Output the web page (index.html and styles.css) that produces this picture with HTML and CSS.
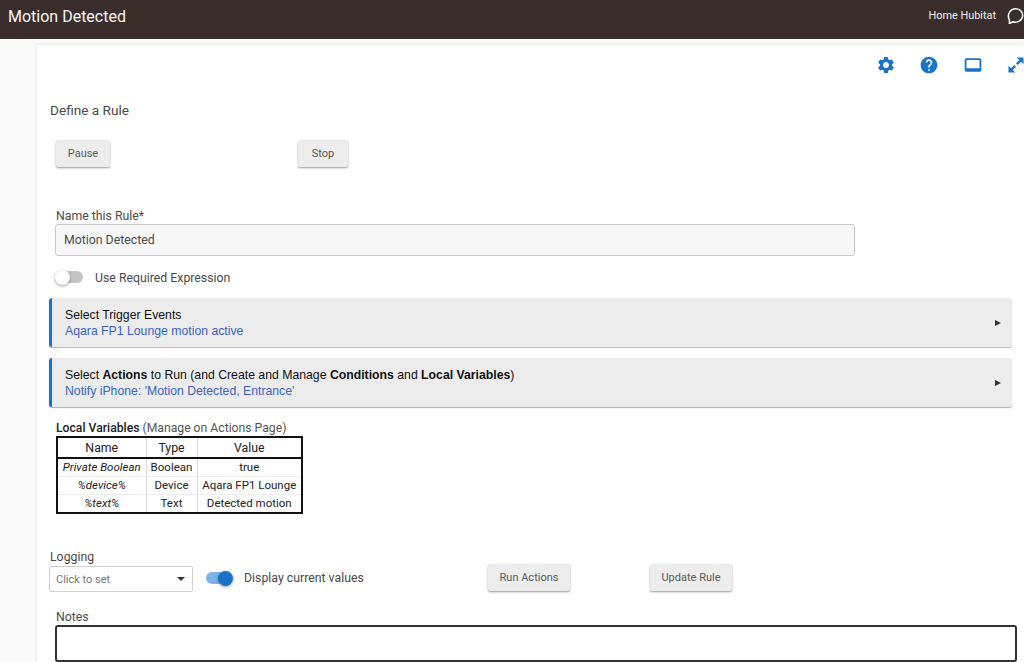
FILE: index.html
```html
<!DOCTYPE html>
<html lang="en">
<head>
<meta charset="utf-8">
<title>Motion Detected</title>
<link rel="stylesheet" href="styles.css">
</head>
<body>
<header class="topbar">
  <div class="page-title">Motion Detected</div>
  <div class="hub">
    <span class="hub-name">Home Hubitat</span>
    <svg class="chat" viewBox="0 0 18 18" width="18" height="18"><path d="M3.2 16.2 C3.6 14.8 3.7 13.6 3.2 12.6 C1.6 9.4 2.4 5 5.6 2.9 C9 .8 13.6 1.6 15.6 4.8 C17.6 8 16.6 12.2 13.2 14.2 C10.9 15.5 8.4 15.5 6.6 14.8 C5.6 15.6 4.4 16 3.2 16.2 Z" fill="none" stroke="#fff" stroke-width="1.5" stroke-linejoin="round"/></svg>
  </div>
</header>
<main class="card">
  <div class="tools">
    <svg class="tool" viewBox="0 0 24 24"><path d="M19.14 12.94c.04-.3.06-.61.06-.94 0-.32-.02-.64-.07-.94l2.03-1.58a.49.49 0 0 0 .12-.61l-1.92-3.32a.488.488 0 0 0-.59-.22l-2.39.96c-.5-.38-1.03-.7-1.62-.94l-.36-2.54a.484.484 0 0 0-.48-.41h-3.84c-.24 0-.43.17-.47.41l-.36 2.54c-.59.24-1.13.57-1.62.94l-2.39-.96c-.22-.08-.47 0-.59.22L2.74 8.87c-.12.21-.08.47.12.61l2.03 1.58c-.05.3-.09.63-.09.94s.02.64.07.94l-2.03 1.58a.49.49 0 0 0-.12.61l1.92 3.32c.12.22.37.29.59.22l2.39-.96c.5.38 1.03.7 1.62.94l.36 2.54c.05.24.24.41.48.41h3.84c.24 0 .44-.17.47-.41l.36-2.54c.59-.24 1.13-.56 1.62-.94l2.39.96c.22.08.47 0 .59-.22l1.92-3.32c.12-.22.07-.47-.12-.61l-2.01-1.58zM12 15.6c-1.98 0-3.6-1.62-3.6-3.6s1.62-3.6 3.6-3.6 3.6 1.62 3.6 3.6-1.62 3.6-3.6 3.6z"/></svg>
    <svg class="tool" viewBox="0 0 24 24"><path d="M12 2C6.48 2 2 6.48 2 12s4.48 10 10 10 10-4.48 10-10S17.52 2 12 2zm1 17h-2v-2h2v2zm2.07-7.75l-.9.92C13.45 12.9 13 13.5 13 15h-2v-.5c0-1.1.45-2.1 1.17-2.83l1.24-1.26c.37-.36.59-.86.59-1.41 0-1.1-.9-2-2-2s-2 .9-2 2H8c0-2.21 1.79-4 4-4s4 1.79 4 4c0 .88-.36 1.68-.93 2.25z"/></svg>
    <svg class="tool" viewBox="0 0 24 24"><path fill-rule="evenodd" d="M4 4h16a2 2 0 0 1 2 2v12a2 2 0 0 1-2 2H4a2 2 0 0 1-2-2V6a2 2 0 0 1 2-2zM4.200 6v10h15.600V6z"/></svg>
    <svg class="tool" viewBox="0 0 24 24"><path d="M21 11V3h-8l3 3-4 4 2 2 4-4zM3 13v8h8l-3-3 4-4-2-2-4 4z"/></svg>
  </div>
  <h1 class="section-title">Define a Rule</h1>
  <div class="control-row">
    <button class="btn btn-pause" type="button">Pause</button>
    <button class="btn" type="button">Stop</button>
  </div>
  <label class="field-label">Name this Rule*</label>
  <div class="text-input">Motion Detected</div>
  <div class="switch-row">
    <span class="switch"><span class="track"></span><span class="thumb"></span></span>
    <span class="switch-text">Use Required Expression</span>
  </div>
  <section class="panel">
    <div class="panel-text">
      <div class="panel-head">Select Trigger Events</div>
      <div class="panel-sub">Aqara FP1 Lounge motion active</div>
    </div>
    <span class="arrow"></span>
  </section>
  <section class="panel">
    <div class="panel-text">
      <div class="panel-head">Select <b>Actions</b> to Run (and Create and Manage <b>Conditions</b> and <b>Local Variables</b>)</div>
      <div class="panel-sub">Notify iPhone: 'Motion Detected, Entrance'</div>
    </div>
    <span class="arrow"></span>
  </section>
  <div class="vars-title"><b>Local Variables</b> (Manage on Actions Page)</div>
  <table class="vars">
    <thead>
      <tr><th class="c-name">Name</th><th class="c-type">Type</th><th class="c-value">Value</th></tr>
    </thead>
    <tbody>
      <tr><td><i>Private Boolean</i></td><td>Boolean</td><td>true</td></tr>
      <tr><td><i>%device%</i></td><td>Device</td><td>Aqara FP1 Lounge</td></tr>
      <tr><td><i>%text%</i></td><td>Text</td><td>Detected motion</td></tr>
    </tbody>
  </table>
  <div class="logging-label">Logging</div>
  <div class="logging-row">
    <div class="select"><span>Click to set</span><span class="caret"></span></div>
    <div class="display-toggle">
      <span class="switch on"><span class="track"></span><span class="thumb"></span></span>
      <span>Display current values</span>
    </div>
    <button class="btn btn-run" type="button">Run Actions</button>
    <button class="btn btn-update" type="button">Update Rule</button>
  </div>
  <label class="notes-label">Notes</label>
  <div class="notes"></div>
</main>
</body>
</html>
```
FILE: styles.css
```css
* { box-sizing: border-box; }
html, body { margin: 0; height: 662px; overflow: hidden; }
body { background: #fafafa; font-family: Roboto, "Liberation Sans", sans-serif; color: #4a4a4a; font-size: 12.3px; }
.topbar { height: 39px; background: #392e2c; color: #fff; display: flex; align-items: center; justify-content: space-between; padding-left: 8px; }
.page-title { font-size: 16px; position: relative; top: -3px; color: #f5f5f5; }
.hub { display: flex; align-items: center; gap: 10px; margin-right: 1px; position: relative; top: -4px; }
.hub-name { font-size: 10.9px; color: #eee; }
.chat { display: block; margin-right: -1px; }
.card { margin: 6px 0 0 37px; height: 617px; background: #fff; box-shadow: 0 0 3px rgba(0,0,0,.12); padding: 0 12px; }
.tools { display: flex; justify-content: flex-end; gap: 23.5px; padding-top: 10px; margin-right: -14px; height: 34px; }
.tool { width: 20px; height: 20px; fill: #1a73c9; display: block; flex: none; }
.section-title { margin: 23px 0 0 1px; font-size: 13.6px; font-weight: 400; line-height: 16px; color: #4a4a4a; }
.control-row { display: flex; margin: 22px 0 0 7px; }
.btn { border: 0; background: #ededed; border-radius: 2px; box-shadow: 0 1px 2px rgba(0,0,0,.4); color: #5a5a5a; font: 400 11px Roboto, sans-serif; height: 27px; padding: 0; }
.control-row .btn { width: 50px; }
.control-row .btn-pause { width: 54px; margin-right: 188px; }
.field-label { display: block; margin: 42px 0 0 7px; line-height: 15px; }
.text-input { margin: 0 0 0 6px; width: 800px; height: 32px; border: 1px solid #c8c8c8; border-radius: 3px; background: #f7f7f7; padding-left: 8px; line-height: 30px; }
.switch-row { display: flex; align-items: center; gap: 12px; margin: 12px 0 0 6px; height: 18px; }
.switch-text { position: relative; top: 1px; }
.switch { position: relative; display: inline-block; width: 28px; height: 14px; flex: none; }
.track { position: absolute; left: 2px; right: 0; top: 1px; height: 12px; border-radius: 6px; background: #c4c4c4; }
.thumb { position: absolute; left: 0; top: 0; width: 15px; height: 15px; border-radius: 50%; background: #fff; box-shadow: 0 1px 3px rgba(0,0,0,.4); }
.on .track { background: #7fb3e6; }
.on .thumb { left: 14px; background: #1a73c9; }
.panel { display: flex; align-items: center; justify-content: space-between; margin: 12px 0 0 0; width: 963px; height: 49px; background: #ececec; border-left: 3px solid #1a73c9; border-radius: 3px; box-shadow: 0 1px 1px rgba(0,0,0,.3); padding: 0 11px 0 13px; font-family: "Liberation Sans", Arial, sans-serif; }
.panel + .panel { margin-top: 11px; }
.panel-head { font-size: 12.25px; line-height: 16px; color: #111; }
.panel-sub { font-size: 12.25px; line-height: 16px; color: #3b62c4; }
.arrow { width: 0; height: 0; border-left: 6px solid #333; border-top: 3px solid transparent; border-bottom: 3px solid transparent; }
.vars-title { margin: 14px 0 0 7px; line-height: 15px; font-size: 12.2px; color: #555; }
.vars-title b { font-weight: 500; color: #222; }
.vars { margin: 0 0 0 7px; width: 247px; border-collapse: collapse; border: 2px solid #111; font-size: 11.5px; color: #222; table-layout: fixed; }
.vars th { font-weight: 400; font-size: 12.3px; height: 21px; padding: 0; border-bottom: 2px solid #111; border-right: 1px solid #ddd; }
.vars td { height: 18px; padding: 0; text-align: center; border-right: 1px solid #ddd; border-bottom: 1px solid #eee; }
.vars th:last-child, .vars td:last-child { border-right: 0; }
.vars tr:last-child td { border-bottom: 0; height: 19px; }
.c-name { width: 89px; }
.c-type { width: 51px; }
.logging-label { margin: 36px 0 0 1px; line-height: 15px; }
.logging-row { display: flex; align-items: center; margin-top: 1px; height: 26px; }
.select { width: 144px; height: 26px; border: 1px solid #d0d0d0; border-radius: 2px; display: flex; align-items: center; justify-content: space-between; padding: 0 6px; font-size: 11px; color: #777; background: #fff; }
.caret { width: 0; height: 0; border-top: 4px solid #333; border-left: 4px solid transparent; border-right: 4px solid transparent; margin-right: 1px; }
.display-toggle { display: flex; align-items: center; gap: 12px; width: 283px; margin-left: 11px; padding-bottom: 2px; margin-right: 1px; }
.btn-run { width: 82px; height: 27px; position: relative; top: -2px; }
.btn-update { width: 82px; height: 27px; margin-left: 80px; position: relative; top: -2px; }
.notes-label { display: block; margin: 18px 0 0 7px; line-height: 15px; }
.notes { margin: 0 0 0 6px; width: 962px; height: 37px; border: 2px solid #333; border-radius: 3px; background: #fff; }
```
